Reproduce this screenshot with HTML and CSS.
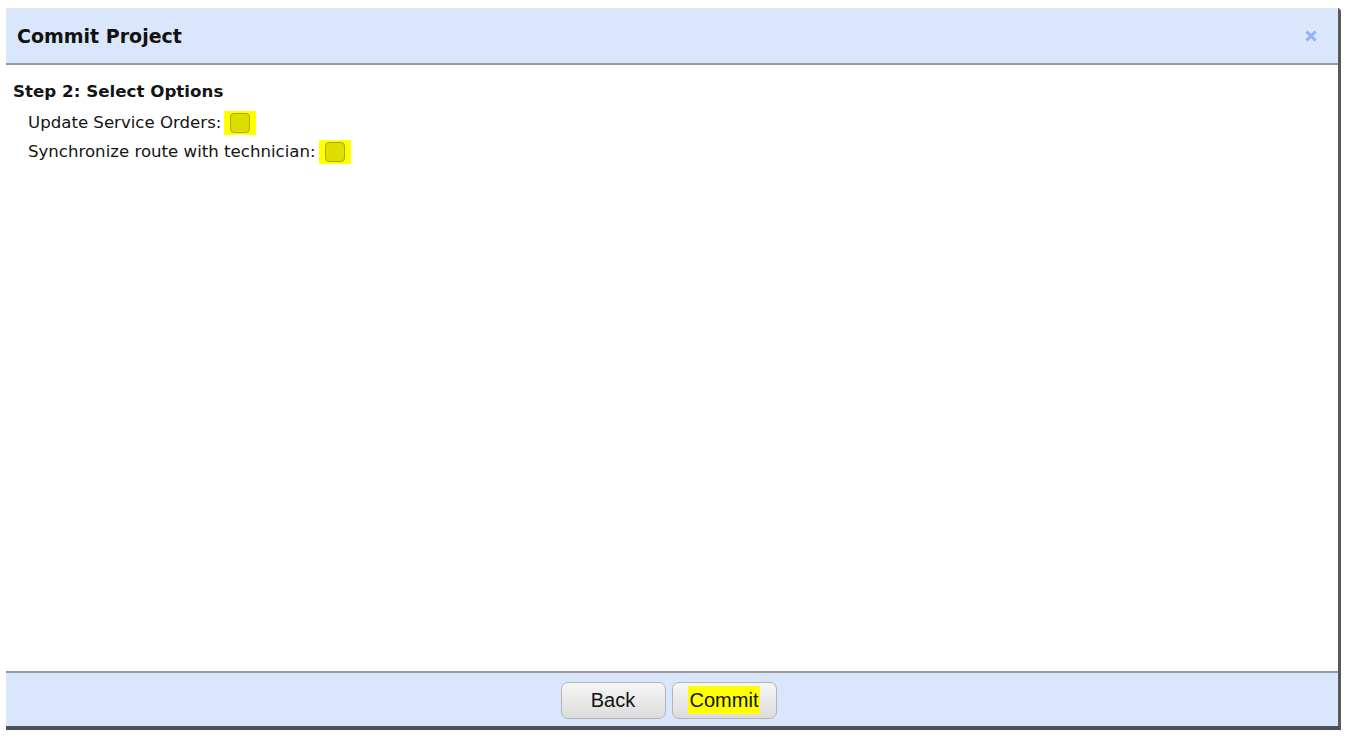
FILE: index.html
```html
<!DOCTYPE html>
<html lang="en">

<head>
    <meta charset="utf-8">
    <title>Commit Project</title>
    <link rel="stylesheet" href="styles.css">
</head>

<body>

    <div class="dialog">
        <div class="dialog-head">
            <h1>Commit Project</h1>
            <svg class="close" viewBox="0 0 12 12" width="12" height="12">
                <path d="M1.5 1.5 L10.5 10.5 M10.5 1.5 L1.5 10.5"></path>
            </svg>
        </div>

        <div class="dialog-body">
            <h2>Step 2: Select Options</h2>
            <div class="option">
                <span>Update Service Orders:</span>
                <span class="mark"><span class="box"></span></span>
            </div>
            <div class="option">
                <span>Synchronize route with technician:</span>
                <span class="mark"><span class="box"></span></span>
            </div>
        </div>

        <div class="dialog-foot">
            <button class="btn">Back</button>
            <button class="btn"><span class="hl">Commit</span></button>
        </div>
    </div>

</body>

</html>
```

FILE: styles.css
```css
body {
    margin: 0;
    background: #ffffff;
    font-family: "DejaVu Sans", Verdana, sans-serif;
    color: #141414;
}

.dialog {
    margin: 8px 0 0 6px;
    width: 1332px;
    height: 718px;
    display: flex;
    flex-direction: column;
    border-right: 3px solid #5a5a5a;
    border-bottom: 4px solid #4b5058;
    border-radius: 0 4px 0 0;
}

.dialog-head {
    height: 55px;
    background: #d9e6fc;
    border-bottom: 2px solid #9a9a9a;
    display: flex;
    align-items: center;
    justify-content: space-between;
    padding: 0 21px 0 11px;
}

.dialog-head h1 {
    margin: 0;
    font-size: 19px;
    font-weight: bold;
    color: #111;
}

.close {
    stroke: #8fb0fa;
    stroke-width: 3;
}

.dialog-body {
    flex: 1;
    padding: 16px 7px;
}

.dialog-body h2 {
    margin: 0 0 7px 0;
    font-size: 16.7px;
    font-weight: bold;
}

.option {
    display: flex;
    align-items: center;
    padding-left: 15px;
    font-size: 16.6px;
    height: 29px;
}

.mark {
    display: inline-flex;
    align-items: center;
    justify-content: center;
    background: #ffff00;
    width: 32px;
    height: 24px;
    margin-left: 3px;
}

.box {
    width: 18px;
    height: 18px;
    border: 1px solid #a8a800;
    border-radius: 4px;
    background: #dede00;
}

.dialog-foot {
    height: 55px;
    background: #d9e6fc;
    border-top: 2px solid #9a9a9a;
    display: flex;
    align-items: center;
    justify-content: center;
    gap: 6px;
    padding: 1px 7px 0 0;
    box-sizing: border-box;
}

.btn {
    width: 105px;
    height: 37px;
    border: 1px solid #b4b4b4;
    border-radius: 7px;
    background: linear-gradient(#f6f6f6, #dcdcdc);
    font-family: "Liberation Sans", Arial, sans-serif;
    font-size: 20px;
    color: #111;
    padding: 0;
}

.hl {
    background: #ffff00;
    padding: 3px 2px;
}
```
